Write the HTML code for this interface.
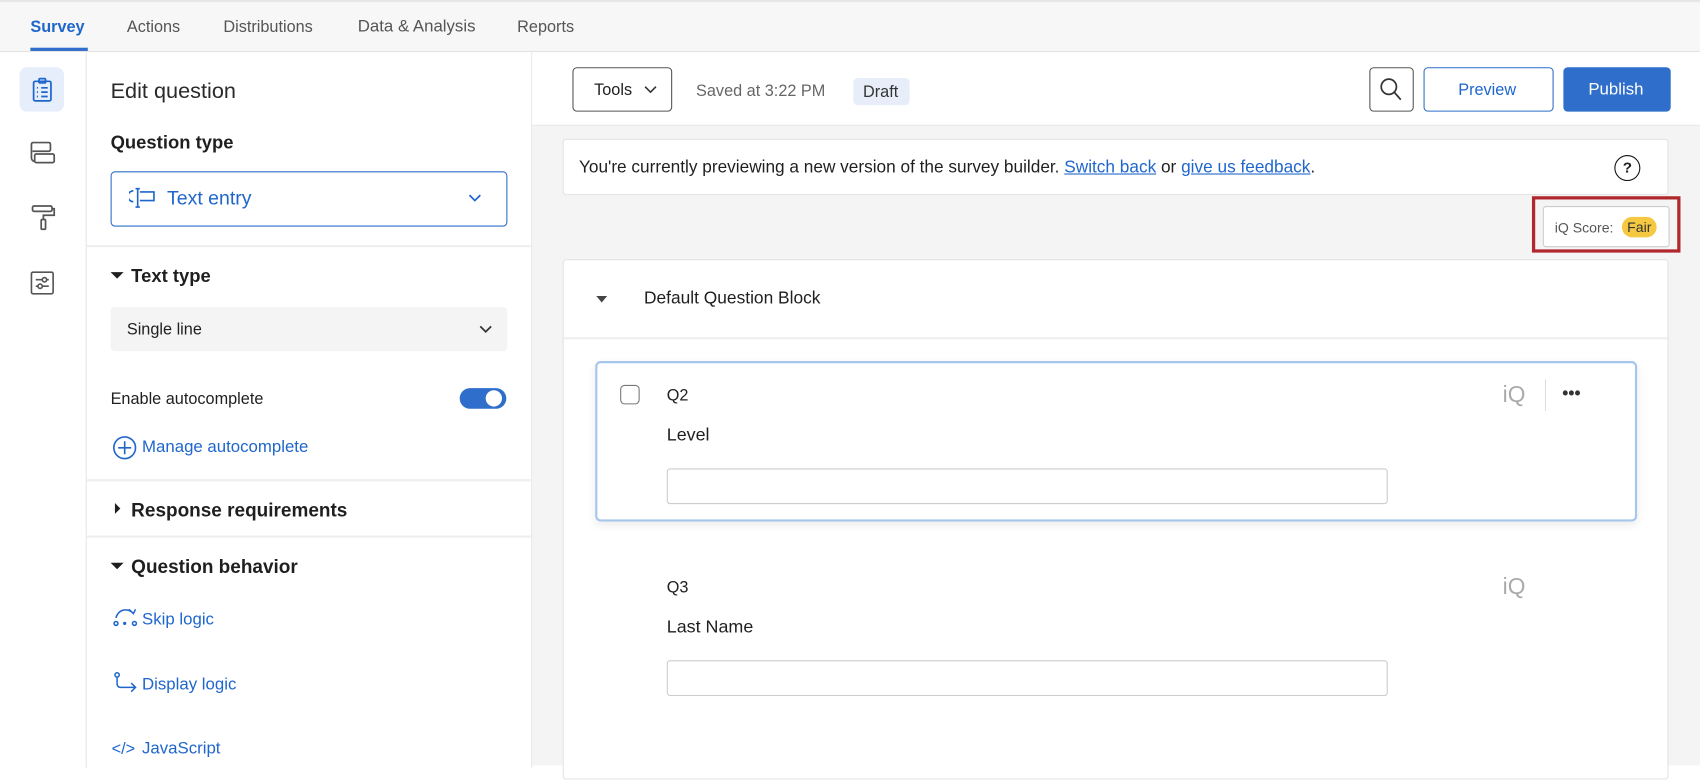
<!DOCTYPE html>
<html><head><meta charset="utf-8"><style>
*{box-sizing:border-box;margin:0;padding:0}
html,body{width:1700px;height:765px;overflow:hidden;background:#fff}
#w{position:absolute;left:0;top:0;width:1568px;height:706px;transform:scale(1.08418);transform-origin:0 0;font-family:"Liberation Sans",sans-serif;color:#1f1f1f}
.a{position:absolute}
.t{position:absolute;white-space:nowrap;transform:translateY(-50%)}
.b{font-weight:bold}
</style></head><body><div id="w">
<div class="a" style="left:0;top:0;width:1568px;height:48px;background:#f7f7f7;border-top:2px solid #e6e6e6;border-bottom:1px solid #e3e3e3"></div>
<div class="t b" style="left:28px;top:25px;font-size:15px;color:#1f66cc">Survey</div>
<div class="a" style="left:28px;top:44px;width:53px;height:3px;background:#2f6fcb"></div>
<div class="t" style="left:117px;top:25px;font-size:15px;color:#555">Actions</div>
<div class="t" style="left:206px;top:25px;font-size:15px;color:#555">Distributions</div>
<div class="t" style="left:330px;top:25px;font-size:15.5px;color:#555">Data &amp; Analysis</div>
<div class="t" style="left:477px;top:25px;font-size:15px;color:#555">Reports</div>
<div class="a" style="left:79px;top:48px;width:1px;height:660px;background:#e6e6e6"></div>
<div class="a" style="left:18px;top:62px;width:41px;height:41px;background:#e6eefb;border-radius:7px"></div>
<svg class="a" style="left:29px;top:71px" width="20" height="24" viewBox="0 0 20 24" fill="none" stroke="#1f66cc" stroke-width="1.6"><rect x="2" y="4" width="16" height="18" rx="1.5"/><rect x="7" y="1.5" width="6" height="4" rx="1"/><path d="M5 10h1M9 10h6M5 14h1M9 14h6M5 18h1M9 18h6"/></svg>
<svg class="a" style="left:27px;top:129px" width="26" height="26" viewBox="0 0 26 26" fill="none" stroke="#555" stroke-width="1.6"><path d="M2 13V4a1.5 1.5 0 0 1 1.5-1.5H18a1.5 1.5 0 0 1 1.5 1.5v5a1.5 1.5 0 0 1-1.5 1.5H3"/><rect x="5" y="13" width="18" height="8" rx="1.5"/><path d="M2 13v4a4 4 0 0 0 3 3"/></svg>
<svg class="a" style="left:28px;top:188px" width="24" height="26" viewBox="0 0 24 26" fill="none" stroke="#555" stroke-width="1.6"><rect x="2" y="2" width="18" height="5" rx="1.5"/><path d="M20 4.5h2v6H12v4"/><rect x="10" y="14.5" width="4" height="9" rx="1"/></svg>
<svg class="a" style="left:28px;top:250px" width="22" height="22" viewBox="0 0 22 22" fill="none" stroke="#555" stroke-width="1.5"><rect x="1" y="1" width="20" height="20" rx="1.5"/><path d="M5 8h12M5 14h12"/><circle cx="13" cy="8" r="2" fill="#fff"/><circle cx="9" cy="14" r="2" fill="#fff"/></svg>
<div class="a" style="left:490px;top:48px;width:1px;height:660px;background:#e6e6e6"></div>
<div class="t" style="left:102px;top:85px;font-size:20px;color:#2a2a2a">Edit question</div>
<div class="t b" style="left:102px;top:132px;font-size:17px">Question type</div>
<div class="a" style="left:102px;top:158px;width:366px;height:51px;border:1px solid #2f6fcb;border-radius:4px"></div>
<svg class="a" style="left:119px;top:172px" width="26" height="22" viewBox="0 0 26 22" fill="none" stroke="#1f66cc" stroke-width="1.5"><path d="M4 4a3 3 0 0 0 0 10M8 2v17M6 2h4M6 19h4M10 5h13v8H10"/></svg>
<div class="t" style="left:154px;top:183px;font-size:18px;color:#1f66cc">Text entry</div>
<svg class="a" style="left:431px;top:178px" width="14" height="10" viewBox="0 0 14 10" fill="none" stroke="#1f66cc" stroke-width="1.6"><path d="M2 2l5 5 5-5"/></svg>
<div class="a" style="left:80px;top:226px;width:410px;height:2px;background:#efefef"></div>
<div class="a" style="left:102px;top:251px;border-left:6px solid transparent;border-right:6px solid transparent;border-top:6px solid #1f1f1f"></div>
<div class="t b" style="left:121px;top:255px;font-size:17px">Text type</div>
<div class="a" style="left:102px;top:283px;width:366px;height:41px;background:#f4f4f4;border-radius:4px"></div>
<div class="t" style="left:117px;top:304px;font-size:15px">Single line</div>
<svg class="a" style="left:441px;top:299px" width="14" height="10" viewBox="0 0 14 10" fill="none" stroke="#333" stroke-width="1.6"><path d="M2 2l5 5 5-5"/></svg>
<div class="t" style="left:102px;top:368px;font-size:15px">Enable autocomplete</div>
<div class="a" style="left:424px;top:358px;width:43px;height:19px;border-radius:10px;background:#2f6fcb"></div>
<div class="a" style="left:448px;top:360px;width:15px;height:15px;border-radius:50%;background:#fff"></div>
<svg class="a" style="left:104px;top:402px" width="22" height="22" viewBox="0 0 22 22" fill="none" stroke="#1f66cc" stroke-width="1.5"><circle cx="11" cy="11" r="10"/><path d="M11 5v12M5 11h12"/></svg>
<div class="t" style="left:131px;top:413px;font-size:15.5px;color:#1f66cc">Manage autocomplete</div>
<div class="a" style="left:80px;top:442px;width:410px;height:2px;background:#efefef"></div>
<div class="a" style="left:106px;top:464px;border-top:5px solid transparent;border-bottom:5px solid transparent;border-left:5px solid #1f1f1f"></div>
<div class="t b" style="left:121px;top:471px;font-size:17.5px">Response requirements</div>
<div class="a" style="left:80px;top:494px;width:410px;height:2px;background:#efefef"></div>
<div class="a" style="left:102px;top:519px;border-left:6px solid transparent;border-right:6px solid transparent;border-top:6px solid #1f1f1f"></div>
<div class="t b" style="left:121px;top:523px;font-size:17.5px">Question behavior</div>
<svg class="a" style="left:104px;top:560px" width="24" height="20" viewBox="0 0 24 20" fill="none" stroke="#1f66cc" stroke-width="1.4"><path d="M3 10a9 9 0 0 1 16-4M15 2l4 4 2-4"/><circle cx="3" cy="15" r="1.8"/><circle cx="11" cy="15" r=".8" fill="#1f66cc"/><circle cx="20" cy="15" r="1.8"/></svg>
<div class="t" style="left:131px;top:572px;font-size:15.5px;color:#1f66cc">Skip logic</div>
<svg class="a" style="left:104px;top:619px" width="24" height="22" viewBox="0 0 24 22" fill="none" stroke="#1f66cc" stroke-width="1.4"><circle cx="4" cy="3.5" r="2"/><path d="M4 6v6a3 3 0 0 0 3 3h14M17 11l4 4-4 4"/></svg>
<div class="t" style="left:131px;top:632px;font-size:15.5px;color:#1f66cc">Display logic</div>
<div class="t" style="left:103px;top:691px;font-size:15px;color:#1f66cc">&lt;/&gt;</div>
<div class="t" style="left:131px;top:691px;font-size:15.5px;color:#1f66cc">JavaScript</div>
<div class="a" style="left:491px;top:48px;width:1077px;height:658px;background:#f4f4f4"></div>
<div class="a" style="left:491px;top:48px;width:1077px;height:68px;background:#fff;border-bottom:1px solid #e8e8e8"></div>
<div class="a" style="left:528px;top:62px;width:92px;height:41px;border:1px solid #555;border-radius:4px"></div>
<div class="t" style="left:548px;top:83px;font-size:15px">Tools</div>
<svg class="a" style="left:594px;top:78px" width="12" height="9" viewBox="0 0 12 9" fill="none" stroke="#333" stroke-width="1.5"><path d="M1 2l5 5 5-5"/></svg>
<div class="t" style="left:642px;top:84px;font-size:15px;color:#666">Saved at 3:22 PM</div>
<div class="a" style="left:787px;top:72px;width:52px;height:25px;background:#e8eef9;border-radius:4px"></div>
<div class="t" style="left:796px;top:85px;font-size:15px;color:#333">Draft</div>
<div class="a" style="left:1263px;top:62px;width:41px;height:41px;border:1px solid #555;border-radius:4px"></div>
<svg class="a" style="left:1271px;top:70px" width="24" height="24" viewBox="0 0 24 24" fill="none" stroke="#333" stroke-width="1.6"><circle cx="10" cy="10" r="7"/><path d="M15 15l6 7"/></svg>
<div class="a" style="left:1313px;top:62px;width:120px;height:41px;border:1px solid #2f6fcb;border-radius:4px"></div>
<div class="t" style="left:1345px;top:83px;font-size:15px;color:#1f66cc">Preview</div>
<div class="a" style="left:1442px;top:62px;width:99px;height:41px;background:#2f6fcb;border-radius:4px"></div>
<div class="t" style="left:1465px;top:83px;font-size:15.5px;color:#fff">Publish</div>
<div class="a" style="left:519px;top:128px;width:1020px;height:52px;background:#fff;border:1px solid #e3e3e3;border-radius:3px"></div>
<div class="t" style="left:534px;top:155px;font-size:15.9px">You're currently previewing a new version of the survey builder. <span style="color:#1f66cc;text-decoration:underline">Switch back</span> or <span style="color:#1f66cc;text-decoration:underline">give us feedback</span>.</div>
<div class="a" style="left:1489px;top:143px;width:24px;height:24px;border:1.6px solid #111;border-radius:50%;font-size:14px;font-weight:bold;text-align:center;line-height:21px">?</div>
<div class="a" style="left:1413px;top:181px;width:137px;height:52px;border:3px solid #b0282e"></div>
<div class="a" style="left:1423px;top:190px;width:117px;height:38px;background:#fff;border:1px solid #ccc;border-radius:3px"></div>
<div class="t" style="left:1434px;top:210px;font-size:13px;color:#555">iQ Score:</div>
<div class="a" style="left:1496px;top:200px;width:32px;height:19px;background:#f5c842;border-radius:10px;font-size:13px;text-align:center;line-height:19px;color:#333">Fair</div>
<div class="a" style="left:519px;top:239px;width:1020px;height:480px;background:#fff;border:1px solid #e3e3e3;border-radius:3px"></div>
<div class="a" style="left:550px;top:273px;border-left:5px solid transparent;border-right:5px solid transparent;border-top:6px solid #444"></div>
<div class="t" style="left:594px;top:276px;font-size:16px">Default Question Block</div>
<div class="a" style="left:520px;top:311px;width:1018px;height:2px;background:#efefef"></div>
<div class="a" style="left:549px;top:333px;width:961px;height:148px;border:2px solid #a6c6ec;border-radius:5px;box-shadow:0 3px 8px rgba(0,0,0,.08)"></div>
<div class="a" style="left:572px;top:355px;width:18px;height:18px;border:1.5px solid #777;border-radius:4px"></div>
<div class="t" style="left:615px;top:365px;font-size:15px">Q2</div>
<div class="t" style="left:1386px;top:365px;font-size:21px;color:#aaa">iQ</div>
<div class="a" style="left:1425px;top:350px;width:1px;height:29px;background:#ddd"></div>
<div class="t b" style="left:1441px;top:364px;font-size:16px;color:#333">•••</div>
<div class="t" style="left:615px;top:402px;font-size:16.5px">Level</div>
<div class="a" style="left:615px;top:432px;width:665px;height:33px;border:1px solid #ccc;border-radius:3px"></div>
<div class="t" style="left:615px;top:542px;font-size:15px">Q3</div>
<div class="t" style="left:1386px;top:542px;font-size:21px;color:#aaa">iQ</div>
<div class="t" style="left:615px;top:579px;font-size:16.5px">Last Name</div>
<div class="a" style="left:615px;top:609px;width:665px;height:33px;border:1px solid #ccc;border-radius:3px"></div>
</div></body></html>
